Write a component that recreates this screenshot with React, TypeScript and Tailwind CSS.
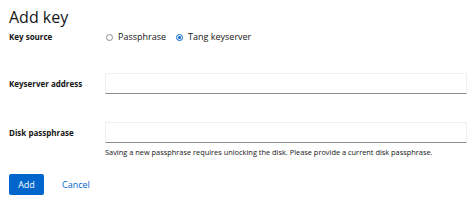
export default function App() {
  return (
    <div className="h-[206px] w-[474px] overflow-hidden bg-white pl-[9px] pt-[6px] font-['Open_Sans',sans-serif] text-[#151515]">
      <h1 className="text-[16px] leading-[22px]">Add key</h1>

      <div className="mt-[2px] grid grid-cols-[96px_362px] items-center">
        <div className="h-[14px] text-[8px] font-bold leading-[14px]">Key source</div>
        <div className="flex h-[14px] items-center text-[9px]">
          <span className="ml-[1px] inline-block h-[7px] w-[7px] rounded-full border border-[#8a8d90]" />
          <span className="ml-[5px]">Passphrase</span>
          <span className="ml-[10px] flex h-[7px] w-[7px] items-center justify-center rounded-full border border-[#0066cc]">
            <span className="h-[3px] w-[3px] rounded-full bg-[#0066cc]" />
          </span>
          <span className="ml-[5px]">Tang keyserver</span>
        </div>

        <div className="mt-[29px] text-[8px] font-bold">Keyserver address</div>
        <div className="mt-[29px] h-[21px] border border-[#f0f0f0] border-b-[#8a8d90]" />

        <div className="mt-[28px] text-[8px] font-bold">Disk passphrase</div>
        <div className="mt-[28px] h-[21px] border border-[#f0f0f0] border-b-[#8a8d90]" />
        <div />
        <div className="mt-[4px] text-[7.4px] text-[#151515]">
          Saving a new passphrase requires unlocking the disk. Please provide a current disk passphrase.
        </div>
      </div>

      <div className="mt-[16px] flex items-center">
        <button className="h-[21px] w-[35px] rounded-[2px] bg-[#0066cc] text-[9px] text-white">Add</button>
        <button className="ml-[18px] text-[9px] text-[#0066cc]">Cancel</button>
      </div>
    </div>
  );
}
